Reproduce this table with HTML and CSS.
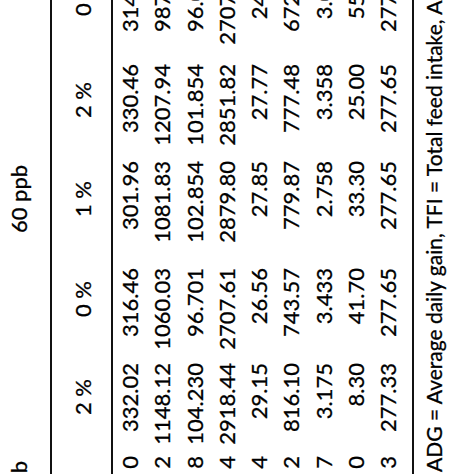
FILE: index.html
```html
<!DOCTYPE html>
<html>
<head>
<meta charset="utf-8">
<link rel="stylesheet" href="styles.css">
</head>
<body>
<div class="frame">
  <div class="canvas">
    <div class="row hdr1">
      <div class="cell grp-prev">ppb</div>
      <div class="cell grp-mid">60 ppb</div>
      <div class="cell"></div>
    </div>
    <div class="row hdr2">
      <div class="cell"></div>
      <div class="cell h h2">2 %</div>
      <div class="cell h h3">0 %</div>
      <div class="cell h h4">1 %</div>
      <div class="cell h h5">2 %</div>
      <div class="cell h h6">0 %</div>
    </div>
    <div class="body">
      <div class="row data"><div class="cell">0</div><div class="cell">332.02</div><div class="cell">316.46</div><div class="cell">301.96</div><div class="cell">330.46</div><div class="cell">314.00</div></div>
      <div class="row data"><div class="cell">2</div><div class="cell">1148.12</div><div class="cell">1060.03</div><div class="cell">1081.83</div><div class="cell">1207.94</div><div class="cell">987.00</div></div>
      <div class="row data"><div class="cell">8</div><div class="cell">104.230</div><div class="cell">96.701</div><div class="cell">102.854</div><div class="cell">101.854</div><div class="cell">96.000</div></div>
      <div class="row data"><div class="cell">4</div><div class="cell">2918.44</div><div class="cell">2707.61</div><div class="cell">2879.80</div><div class="cell">2851.82</div><div class="cell">2707.00</div></div>
      <div class="row data"><div class="cell">4</div><div class="cell">29.15</div><div class="cell">26.56</div><div class="cell">27.85</div><div class="cell">27.77</div><div class="cell">24.00</div></div>
      <div class="row data"><div class="cell">2</div><div class="cell">816.10</div><div class="cell">743.57</div><div class="cell">779.87</div><div class="cell">777.48</div><div class="cell">672.00</div></div>
      <div class="row data"><div class="cell">7</div><div class="cell">3.175</div><div class="cell">3.433</div><div class="cell">2.758</div><div class="cell">3.358</div><div class="cell">3.000</div></div>
      <div class="row data"><div class="cell">0</div><div class="cell">8.30</div><div class="cell">41.70</div><div class="cell">33.30</div><div class="cell">25.00</div><div class="cell">55.00</div></div>
      <div class="row data"><div class="cell">3</div><div class="cell">277.33</div><div class="cell">277.65</div><div class="cell">277.65</div><div class="cell">277.65</div><div class="cell">277.00</div></div>
    </div>
    <div class="note">ADG = Average daily gain, TFI = Total feed intake, A</div>
  </div>
</div>
</body>
</html>
```
FILE: styles.css
```css
html, body {
  margin: 0;
  padding: 0;
  background: #fff;
}
.frame {
  width: 474px;
  height: 474px;
  overflow: hidden;
}
.canvas {
  width: 474px;
  height: 474px;
  overflow: hidden;
  background: #fff;
  color: #000;
  font-family: Lato, "Liberation Sans", sans-serif;
  font-size: 22px;
  -webkit-text-stroke: 0.3px #000;
  transform: rotate(-90deg);
}
.row {
  display: grid;
  grid-template-columns: 18px 93px 95px 107px 97px 101px;
  width: 511px;
}
.cell {
  display: flex;
  justify-content: flex-end;
  white-space: nowrap;
}
.hdr1 {
  height: 50px;
  line-height: 37px;
  border-bottom: 2px solid #111;
}
.grp-prev {
  grid-column: 1 / 3;
  padding-right: 98px;
}
.grp-mid {
  grid-column: 3 / 6;
  justify-content: center;
  padding-left: 29px;
}
.hdr2 {
  height: 56px;
  padding-top: 3px;
  line-height: 56px;
  border-bottom: 2px solid #111;
}
.h2 { padding-right: 16px; }
.h3 { padding-right: 13px; }
.h4 { padding-right: 20px; }
.h5 { padding-right: 18px; }
.h6 { padding-right: 17px; }
.body {
  width: 511px;
  padding-top: 1.2px;
  padding-bottom: 7.2px;
  border-bottom: 2px solid #111;
}
.data {
  height: 32.25px;
  line-height: 32.25px;
}
.note {
  margin-top: 5px;
  padding-left: 2px;
  font-size: 21px;
  line-height: 30px;
  white-space: nowrap;
}
```
